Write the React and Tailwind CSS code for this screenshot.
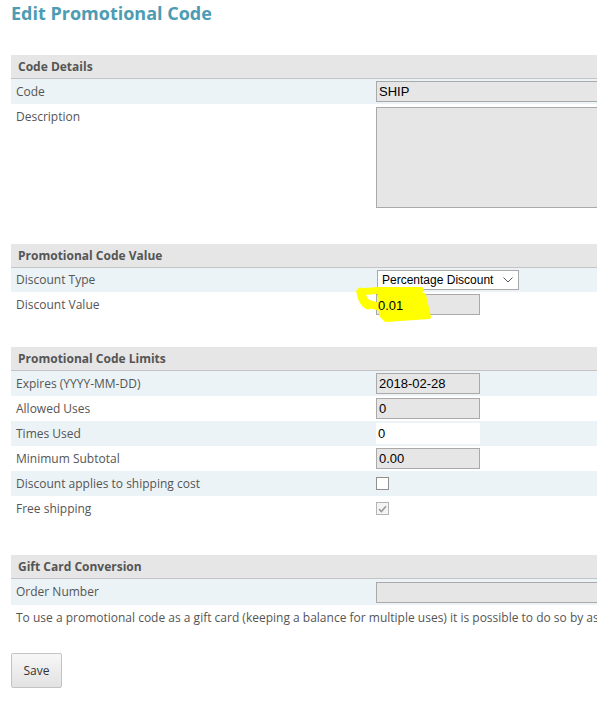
import React from "react";

const Header = ({ children }) => (
  <div className="h-[24px] bg-[#e6e6e6] border-b border-[#c4c4c4] pl-[7px] flex items-center font-bold text-[12px] text-[#555]">
    {children}
  </div>
);

const Row = ({ label, alt, h = "h-[25px]", top, children }) => (
  <div className={`flex ${h} ${top ? "items-start" : "items-center"} ${alt ? "bg-[#ebf3f7]" : ""}`}>
    <div className={`w-[365px] shrink-0 pl-[5px] text-[12px] text-[#555] ${top ? "leading-[25px]" : ""}`}>
      {label}
    </div>
    <div className={`relative ${top ? "pt-[3px]" : ""}`}>{children}</div>
  </div>
);

const Field = ({ value, wide, plain }) => (
  <div
    className={`h-[21px] flex items-center pl-[2px] text-[13px] text-black font-['Liberation_Sans',Arial,sans-serif] ${
      wide ? "w-[300px]" : "w-[104px]"
    } ${plain ? "bg-white" : "bg-[#e6e6e6] border border-[#a9a9a9]"}`}
  >
    {value}
  </div>
);

const Check = ({ checked }) => (
  <div
    className={`w-[13px] h-[13px] border flex items-center justify-center ${
      checked ? "border-[#b5b5b5] bg-[#f4f4f4]" : "border-[#8f8f8f] bg-white"
    }`}
  >
    {checked && (
      <svg width="9" height="8" viewBox="0 0 9 8">
        <path d="M1 4.2 L3.4 6.5 L8 1.2" fill="none" stroke="#9a9a9a" strokeWidth="1.6" />
      </svg>
    )}
  </div>
);

export default function App() {
  return (
    <div className="w-[597px] min-h-[706px] overflow-hidden bg-white pl-[11px] font-['Open_Sans',sans-serif]">
      <h1 className="pt-[1px] text-[18px] leading-[24px] font-bold text-[#4c9cb3]">Edit Promotional Code</h1>

      <div className="w-[820px] mt-[30px]">
        <Header>Code Details</Header>
        <Row label="Code" alt>
          <Field value="SHIP" wide />
        </Row>
        <Row label="Description" h="h-[107px]" top>
          <div className="w-[300px] h-[101px] bg-[#e6e6e6] border border-[#a9a9a9]" />
        </Row>
      </div>

      <div className="w-[820px] mt-[33px]">
        <Header>Promotional Code Value</Header>
        <Row label="Discount Type" alt h="h-[24px]">
          <div className="ml-[1px] w-[142px] h-[20px] bg-white border border-[#a9a9a9] flex items-center justify-between pl-[4px] pr-[5px] text-[12px] text-black font-['Liberation_Sans',Arial,sans-serif]">
            <span>Percentage Discount</span>
            <svg width="10" height="6" viewBox="0 0 10 6">
              <path d="M0.5 0.5 L5 5 L9.5 0.5" fill="none" stroke="#555" strokeWidth="1" />
            </svg>
          </div>
        </Row>
        <Row label="Discount Value">
          <div className="w-[104px] h-[21px] bg-[#e6e6e6] border border-[#a9a9a9]" />
          <svg
            className="absolute left-[-20px] top-[-7px] z-[5]"
            width="80"
            height="36"
            viewBox="0 0 80 36"
          >
            <g fill="#ffff00" stroke="#ffff00" strokeLinecap="round" strokeLinejoin="round">
              <path d="M4 5 Q30 2 64 3" strokeWidth="7" fill="none" />
              <path d="M5 5 Q6 14 12 18" strokeWidth="9" fill="none" />
              <path d="M10 16 L24 20" strokeWidth="8" fill="none" />
              <path d="M24 7 L68 8 L73 30 L30 33 L25 28 Z" strokeWidth="4" />
            </g>
          </svg>
          <span className="absolute left-[2px] top-[2px] z-10 text-[13px] text-black font-['Liberation_Sans',Arial,sans-serif]">
            0.01
          </span>
        </Row>
      </div>

      <div className="w-[820px] mt-[30px]">
        <Header>Promotional Code Limits</Header>
        <Row label="Expires (YYYY-MM-DD)" alt>
          <Field value="2018-02-28" />
        </Row>
        <Row label="Allowed Uses">
          <Field value="0" />
        </Row>
        <Row label="Times Used" alt>
          <Field value="0" plain />
        </Row>
        <Row label="Minimum Subtotal">
          <Field value="0.00" />
        </Row>
        <Row label="Discount applies to shipping cost" alt>
          <Check />
        </Row>
        <Row label="Free shipping">
          <Check checked />
        </Row>
      </div>

      <div className="w-[820px] mt-[34px]">
        <Header>Gift Card Conversion</Header>
        <Row label="Order Number" alt h="h-[26px]">
          <Field value="" wide />
        </Row>
        <div className="h-[25px] pl-[5px] flex items-center text-[12px] text-[#555] whitespace-nowrap">
          To use a promotional code as a gift card (keeping a balance for multiple uses) it is possible to do so by assigning an order number to the code.
        </div>
      </div>

      <button className="mt-[23px] w-[51px] h-[35px] rounded-[2px] border border-[#c3c3c3] bg-gradient-to-b from-[#f7f7f7] to-[#e2e2e2] text-[12px] text-[#333]">
        Save
      </button>
    </div>
  );
}
